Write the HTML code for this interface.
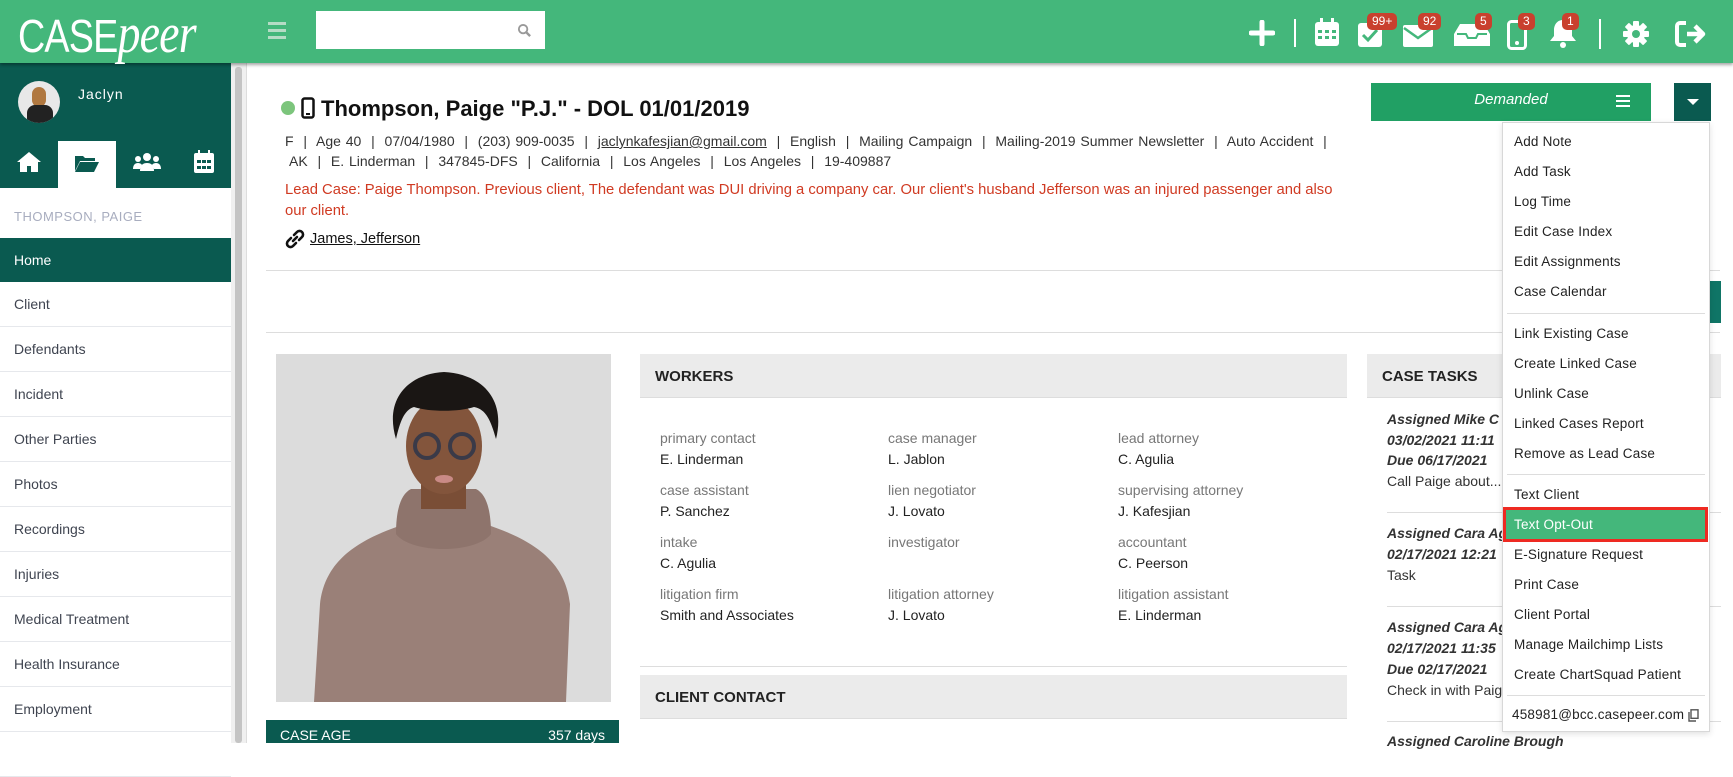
<!DOCTYPE html>
<html><head><meta charset="utf-8">
<style>
*{margin:0;padding:0;box-sizing:border-box}
body{width:1733px;height:743px;overflow:hidden;background:#fff;font-family:"Liberation Sans",sans-serif;position:relative;color:#222}
.a{position:absolute}
#hdr{left:0;top:0;width:1733px;height:63px;background:#44b77b;box-shadow:0 2px 3px rgba(0,0,0,.35);z-index:5}
.badge{position:absolute;background:#c9402e;color:#fff;font-size:12px;border-radius:5px;padding:1px 5px;line-height:15px}
.side-item{position:absolute;left:0;width:231px;height:45px;border-bottom:1px solid #e6e8ec;font-size:14px;color:#3f4450;padding-left:14px;line-height:45px}
.mi{position:absolute;left:1514px;font-size:13.5px;color:#222;letter-spacing:.2px}
.sep{position:absolute;left:1507px;width:198px;height:1px;background:#ddd}
.wl{position:absolute;font-size:14px;color:#777}
.wv{position:absolute;font-size:14px;color:#222}
.ti{position:absolute;left:1387px;font-size:14px;font-style:italic;font-weight:bold;color:#333;white-space:nowrap}
</style></head><body>

<div id="hdr" class="a">
  <div class="a" style="left:18px;top:2px;color:#fff;font-size:46px;letter-spacing:-1px;font-family:'Liberation Sans',sans-serif;transform:scaleX(.82);transform-origin:left">CASE<span style="font-family:'Liberation Serif',serif;font-style:italic;font-size:56px">peer</span></div>
  <div class="a" style="left:268px;top:22px;width:18px;height:3px;background:#b5dcc5;box-shadow:0 7px 0 #b5dcc5,0 14px 0 #b5dcc5"></div>
  <div class="a" style="left:316px;top:11px;width:229px;height:38px;background:#fff"></div>
  <svg class="a" style="left:517px;top:23px" width="15" height="15" viewBox="0 0 16 16"><circle cx="6.5" cy="6.5" r="4.5" fill="none" stroke="#999" stroke-width="2"/><path d="M10 10l4 4" stroke="#999" stroke-width="2.5"/></svg>
  <svg class="a" style="left:1249px;top:20px" width="26" height="26" viewBox="0 0 26 26"><path d="M13 2v22M2 13h22" stroke="#fff" stroke-width="5" stroke-linecap="round"/></svg>
  <div class="a" style="left:1294px;top:19px;width:2px;height:28px;background:#fff"></div>
  <svg class="a" style="left:1314px;top:17px" width="26" height="30" viewBox="0 0 26 30"><rect x="1" y="5" width="24" height="24" rx="3" fill="#fff"/><rect x="6" y="1" width="3" height="7" fill="#fff"/><rect x="17" y="1" width="3" height="7" fill="#fff"/><g fill="#44b77b"><rect x="4" y="13" width="4" height="3"/><rect x="11" y="13" width="4" height="3"/><rect x="18" y="13" width="4" height="3"/><rect x="4" y="19" width="4" height="3"/><rect x="11" y="19" width="4" height="3"/><rect x="18" y="19" width="4" height="3"/></g></svg>
  <svg class="a" style="left:1358px;top:22px" width="26" height="25" viewBox="0 0 26 25"><rect x="0" y="1" width="24" height="24" rx="3" fill="#fff"/><path d="M5 13l5 5 9-10" stroke="#44b77b" stroke-width="3" fill="none"/></svg>
  <div class="badge" style="left:1367px;top:13px">99+</div>
  <svg class="a" style="left:1403px;top:25px" width="30" height="22" viewBox="0 0 30 22"><rect x="0" y="0" width="30" height="22" rx="2" fill="#fff"/><path d="M1 3l14 10 14-10" stroke="#44b77b" stroke-width="2.5" fill="none"/></svg>
  <div class="badge" style="left:1418px;top:13px">92</div>
  <svg class="a" style="left:1454px;top:24px" width="36" height="22" viewBox="0 0 36 22"><path d="M6 0h24l6 10v12H0V10z" fill="#fff"/><path d="M3 10h9l2 4h8l2-4h9" stroke="#44b77b" stroke-width="2" fill="none"/></svg>
  <div class="badge" style="left:1475px;top:13px">5</div>
  <svg class="a" style="left:1507px;top:20px" width="20" height="30" viewBox="0 0 20 30"><rect x="1.5" y="1.5" width="17" height="27" rx="3" fill="none" stroke="#fff" stroke-width="3"/><circle cx="10" cy="23" r="2" fill="#fff"/></svg>
  <div class="badge" style="left:1518px;top:13px">3</div>
  <svg class="a" style="left:1549px;top:18px" width="28" height="30" viewBox="0 0 28 30"><path d="M14 2c-6 0-9 5-9 10v6l-4 5h26l-4-5v-6c0-5-3-10-9-10z" fill="#fff"/><circle cx="14" cy="27" r="3" fill="#fff"/></svg>
  <div class="badge" style="left:1562px;top:13px">1</div>
  <div class="a" style="left:1599px;top:19px;width:2px;height:30px;background:#fff"></div>
  <svg class="a" style="left:1622px;top:20px" width="28" height="28" viewBox="0 0 28 28"><g fill="#fff"><circle cx="14" cy="14" r="9"/><rect x="11" y="1" width="6" height="26" rx="1"/><rect x="11" y="1" width="6" height="26" rx="1" transform="rotate(45 14 14)"/><rect x="11" y="1" width="6" height="26" rx="1" transform="rotate(90 14 14)"/><rect x="11" y="1" width="6" height="26" rx="1" transform="rotate(135 14 14)"/></g><circle cx="14" cy="14" r="4" fill="#44b77b"/></svg>
  <svg class="a" style="left:1675px;top:20px" width="32" height="28" viewBox="0 0 32 28"><path d="M11 3H5a3 3 0 0 0-3 3v16a3 3 0 0 0 3 3h6" stroke="#fff" stroke-width="4" fill="none"/><path d="M12 14h16M20 6l8 8-8 8" stroke="#fff" stroke-width="4.5" fill="none" stroke-linejoin="round"/></svg>
</div>

<div class="a" style="left:0;top:63px;width:231px;height:125px;background:#0a5a50"></div>
<div class="a" style="left:18px;top:81px;width:42px;height:42px;border-radius:50%;background:#e8e8e8;overflow:hidden"><div style="position:absolute;left:14px;top:6px;width:14px;height:20px;border-radius:7px;background:#b07840"></div><div style="position:absolute;left:9px;top:24px;width:26px;height:20px;border-radius:8px 8px 0 0;background:#222"></div></div>
<div class="a" style="left:78px;top:86px;color:#fff;font-size:14px;letter-spacing:1px">Jaclyn</div>
<div class="a" style="left:58px;top:141px;width:58px;height:47px;background:#fff"></div>
<svg class="a" style="left:16px;top:151px" width="26" height="22" viewBox="0 0 26 22"><path d="M13 1L1 11h3v10h7v-6h4v6h7V11h3z" fill="#fff"/></svg>
<svg class="a" style="left:74px;top:154px" width="26" height="18" viewBox="0 0 26 18"><path d="M1 2h8l2 2h10v3H6L1 17z" fill="#0a5a50"/><path d="M6 8h19l-5 10H1z" fill="#0a5a50"/></svg>
<svg class="a" style="left:133px;top:152px" width="28" height="20" viewBox="0 0 28 20"><g fill="#fff"><circle cx="14" cy="5" r="4"/><circle cx="5" cy="7" r="3"/><circle cx="23" cy="7" r="3"/><path d="M7 19c0-6 3-8 7-8s7 2 7 8z"/><path d="M0 17c0-4 2-6 5-6s4 2 4 2l-2 4z"/><path d="M28 17c0-4-2-6-5-6s-4 2-4 2l2 4z"/></g></svg>
<svg class="a" style="left:194px;top:150px" width="20" height="23" viewBox="0 0 20 23"><rect x="0" y="3" width="20" height="20" rx="2" fill="#fff"/><rect x="4" y="0" width="2" height="5" fill="#fff"/><rect x="14" y="0" width="2" height="5" fill="#fff"/><g fill="#0a5a50"><rect x="3" y="10" width="4" height="3"/><rect x="8" y="10" width="4" height="3"/><rect x="13" y="10" width="4" height="3"/><rect x="3" y="16" width="4" height="3"/><rect x="8" y="16" width="4" height="3"/><rect x="13" y="16" width="4" height="3"/></g></svg>
<div class="a" style="left:14px;top:209px;font-size:13px;color:#a8adbf;letter-spacing:.5px">THOMPSON, PAIGE</div>
<div class="side-item" style="top:238px;background:#0a5a50;color:#fff;border:none;height:44px">Home</div>
<div class="side-item" style="top:282px">Client</div>
<div class="side-item" style="top:327px">Defendants</div>
<div class="side-item" style="top:372px">Incident</div>
<div class="side-item" style="top:417px">Other Parties</div>
<div class="side-item" style="top:462px">Photos</div>
<div class="side-item" style="top:507px">Recordings</div>
<div class="side-item" style="top:552px">Injuries</div>
<div class="side-item" style="top:597px">Medical Treatment</div>
<div class="side-item" style="top:642px">Health Insurance</div>
<div class="side-item" style="top:687px">Employment</div>
<div class="side-item" style="top:732px"></div>
<div class="a" style="left:231px;top:63px;width:16px;height:680px;background:#f0f0f0;border-right:1px solid #ddd"></div>
<div class="a" style="left:235px;top:67px;width:7px;height:676px;background:#c4c4c4;border-radius:3px"></div>

<div class="a" style="left:281px;top:101px;width:14px;height:14px;border-radius:50%;background:#7cc57c"></div>
<svg class="a" style="left:301px;top:97px" width="14" height="22" viewBox="0 0 14 22"><rect x="1.5" y="1.5" width="11" height="19" rx="2" fill="none" stroke="#111" stroke-width="2.5"/><rect x="5" y="16" width="4" height="2" fill="#111"/></svg>
<div class="a" style="left:321px;top:96px;font-size:22px;font-weight:bold;color:#111">Thompson, Paige "P.J." - DOL 01/01/2019</div>
<div class="a" style="left:285px;top:133px;font-size:14px;color:#333;white-space:nowrap;word-spacing:1px">F &nbsp;|&nbsp; Age 40 &nbsp;|&nbsp; 07/04/1980 &nbsp;|&nbsp; (203) 909-0035 &nbsp;|&nbsp; <u>jaclynkafesjian@gmail.com</u> &nbsp;|&nbsp; English &nbsp;|&nbsp; Mailing Campaign &nbsp;|&nbsp; Mailing-2019 Summer Newsletter &nbsp;|&nbsp; Auto Accident &nbsp;|</div>
<div class="a" style="left:289px;top:153px;font-size:14px;color:#333;white-space:nowrap;word-spacing:1px">AK &nbsp;|&nbsp; E. Linderman &nbsp;|&nbsp; 347845-DFS &nbsp;|&nbsp; California &nbsp;|&nbsp; Los Angeles &nbsp;|&nbsp; Los Angeles &nbsp;|&nbsp; 19-409887</div>
<div class="a" style="left:285px;top:180px;font-size:14.8px;color:#d03a22;width:1050px;line-height:21px">Lead Case: Paige Thompson. Previous client, The defendant was DUI driving a company car. Our client's husband Jefferson was an injured passenger and also our client.</div>
<svg class="a" style="left:285px;top:229px" width="20" height="20" viewBox="0 0 20 20"><path d="M8 12l4-4M6 9l-3 3a3 3 0 0 0 5 5l3-3M14 11l3-3a3 3 0 0 0-5-5L9 6" stroke="#111" stroke-width="2.6" fill="none" stroke-linecap="round"/></svg>
<div class="a" style="left:310px;top:231px;font-size:14.5px;color:#111;text-decoration:underline">James, Jefferson</div>
<div class="a" style="left:266px;top:270px;width:1454px;height:1px;background:#ddd"></div>
<div class="a" style="left:266px;top:332px;width:1454px;height:1px;background:#ddd"></div>

<div class="a" style="left:1371px;top:83px;width:280px;height:38px;background:#21a064;color:#fff;font-style:italic;font-size:15px;text-align:center;line-height:34px">Demanded</div>
<div class="a" style="left:1616px;top:95px;width:14px;height:2px;background:#fff;box-shadow:0 5px 0 #fff,0 10px 0 #fff"></div>
<div class="a" style="left:1674px;top:83px;width:37px;height:38px;background:#0a5a50"></div>
<div class="a" style="left:1687px;top:99px;width:0;height:0;border-left:6px solid transparent;border-right:6px solid transparent;border-top:6px solid #fff"></div>
<div class="a" style="left:1709px;top:281px;width:12px;height:42px;background:#0f7566"></div>

<svg class="a" style="left:276px;top:354px" width="335" height="348" viewBox="0 0 335 348">
<rect width="335" height="348" fill="#dcdcdc"/>
<path d="M38 348L44 250c5-45 40-65 85-80l20-8h40l20 8c45 15 80 35 85 80l-4 98z" fill="#9a8078"/>
<path d="M120 180c0-25 5-40 15-45h65c10 5 15 20 15 45c-15 20-80 20-95 0z" fill="#8e746c"/>
<rect x="145" y="120" width="45" height="35" fill="#7a4e36"/>
<ellipse cx="168" cy="92" rx="38" ry="48" fill="#83553c"/>
<path d="M120 85c-12-40 12-65 48-67c38 2 62 27 52 67c-5-18-10-30-22-32c-15 5-45 5-60 0c-10 3-14 15-18 32z" fill="#1a1614"/>
<circle cx="151" cy="92" r="12" fill="none" stroke="#3a3a48" stroke-width="4"/>
<circle cx="186" cy="92" r="12" fill="none" stroke="#3a3a48" stroke-width="4"/>
<ellipse cx="168" cy="125" rx="9" ry="4" fill="#c98a86"/>
</svg>
<div class="a" style="left:266px;top:720px;width:353px;height:23px;background:#0a5a50;color:#fff;font-size:14px"><span style="position:absolute;left:14px;top:7px">CASE AGE</span><span style="position:absolute;right:14px;top:7px">357 days</span></div>

<div class="a" style="left:640px;top:354px;width:707px;height:44px;background:#ebebeb;border-bottom:1px solid #ddd;font-weight:bold;font-size:15px;padding:14px 15px">WORKERS</div>
<div class="wl" style="left:660px;top:430px">primary contact</div><div class="wv" style="left:660px;top:451px">E. Linderman</div>
<div class="wl" style="left:888px;top:430px">case manager</div><div class="wv" style="left:888px;top:451px">L. Jablon</div>
<div class="wl" style="left:1118px;top:430px">lead attorney</div><div class="wv" style="left:1118px;top:451px">C. Agulia</div>
<div class="wl" style="left:660px;top:482px">case assistant</div><div class="wv" style="left:660px;top:503px">P. Sanchez</div>
<div class="wl" style="left:888px;top:482px">lien negotiator</div><div class="wv" style="left:888px;top:503px">J. Lovato</div>
<div class="wl" style="left:1118px;top:482px">supervising attorney</div><div class="wv" style="left:1118px;top:503px">J. Kafesjian</div>
<div class="wl" style="left:660px;top:534px">intake</div><div class="wv" style="left:660px;top:555px">C. Agulia</div>
<div class="wl" style="left:888px;top:534px">investigator</div>
<div class="wl" style="left:1118px;top:534px">accountant</div><div class="wv" style="left:1118px;top:555px">C. Peerson</div>
<div class="wl" style="left:660px;top:586px">litigation firm</div><div class="wv" style="left:660px;top:607px">Smith and Associates</div>
<div class="wl" style="left:888px;top:586px">litigation attorney</div><div class="wv" style="left:888px;top:607px">J. Lovato</div>
<div class="wl" style="left:1118px;top:586px">litigation assistant</div><div class="wv" style="left:1118px;top:607px">E. Linderman</div>
<div class="a" style="left:640px;top:666px;width:707px;height:1px;background:#ddd"></div>
<div class="a" style="left:640px;top:675px;width:707px;height:44px;background:#ebebeb;border-bottom:1px solid #ddd;font-weight:bold;font-size:15px;padding:14px 15px">CLIENT CONTACT</div>

<div class="a" style="left:1367px;top:354px;width:354px;height:44px;background:#ebebeb;border-bottom:1px solid #ddd;font-weight:bold;font-size:15px;padding:14px 15px">CASE TASKS</div>
<div class="ti" style="top:411px">Assigned Mike C</div><div class="ti" style="top:432px">03/02/2021 11:11</div><div class="ti" style="top:452px">Due 06/17/2021</div><div class="a" style="left:1387px;top:473px;font-size:14px;color:#333">Call Paige about...</div>
<div class="a" style="left:1387px;top:512px;width:334px;height:1px;background:#ddd"></div>
<div class="ti" style="top:525px">Assigned Cara Ag</div><div class="ti" style="top:546px">02/17/2021 12:21</div><div class="a" style="left:1387px;top:567px;font-size:14px;color:#333">Task</div>
<div class="a" style="left:1387px;top:606px;width:334px;height:1px;background:#ddd"></div>
<div class="ti" style="top:619px">Assigned Cara Ag</div><div class="ti" style="top:640px">02/17/2021 11:35</div><div class="ti" style="top:661px">Due 02/17/2021</div><div class="a" style="left:1387px;top:682px;font-size:14px;color:#333">Check in with Paig</div>
<div class="a" style="left:1387px;top:721px;width:334px;height:1px;background:#ddd"></div>
<div class="ti" style="top:733px">Assigned Caroline Brough</div>

<div class="a" style="left:1502px;top:122px;width:208px;height:610px;background:#fff;border:1px solid #d8d8d8;box-shadow:0 2px 6px rgba(0,0,0,.12)"></div>
<div class="mi" style="top:134px">Add Note</div>
<div class="mi" style="top:164px">Add Task</div>
<div class="mi" style="top:194px">Log Time</div>
<div class="mi" style="top:224px">Edit Case Index</div>
<div class="mi" style="top:254px">Edit Assignments</div>
<div class="mi" style="top:284px">Case Calendar</div>
<div class="sep" style="top:313px"></div>
<div class="mi" style="top:326px">Link Existing Case</div>
<div class="mi" style="top:356px">Create Linked Case</div>
<div class="mi" style="top:386px">Unlink Case</div>
<div class="mi" style="top:416px">Linked Cases Report</div>
<div class="mi" style="top:446px">Remove as Lead Case</div>
<div class="sep" style="top:474px"></div>
<div class="mi" style="top:487px">Text Client</div>
<div class="a" style="left:1503px;top:507px;width:205px;height:35px;background:#44b77b;border:3px solid #ee2a22"></div>
<div class="mi" style="top:517px;color:#fff">Text Opt-Out</div>
<div class="mi" style="top:547px">E-Signature Request</div>
<div class="mi" style="top:577px">Print Case</div>
<div class="mi" style="top:607px">Client Portal</div>
<div class="mi" style="top:637px">Manage Mailchimp Lists</div>
<div class="mi" style="top:667px">Create ChartSquad Patient</div>
<div class="sep" style="top:695px"></div>
<div class="mi" style="top:707px;left:1512px">458981@bcc.casepeer.com</div>
<svg class="a" style="left:1688px;top:709px" width="11" height="13" viewBox="0 0 11 13"><rect x="3" y="0.8" width="7" height="8.5" fill="none" stroke="#555" stroke-width="1.4"/><path d="M1 3v9h7" fill="none" stroke="#555" stroke-width="1.4"/></svg>
</body></html>
